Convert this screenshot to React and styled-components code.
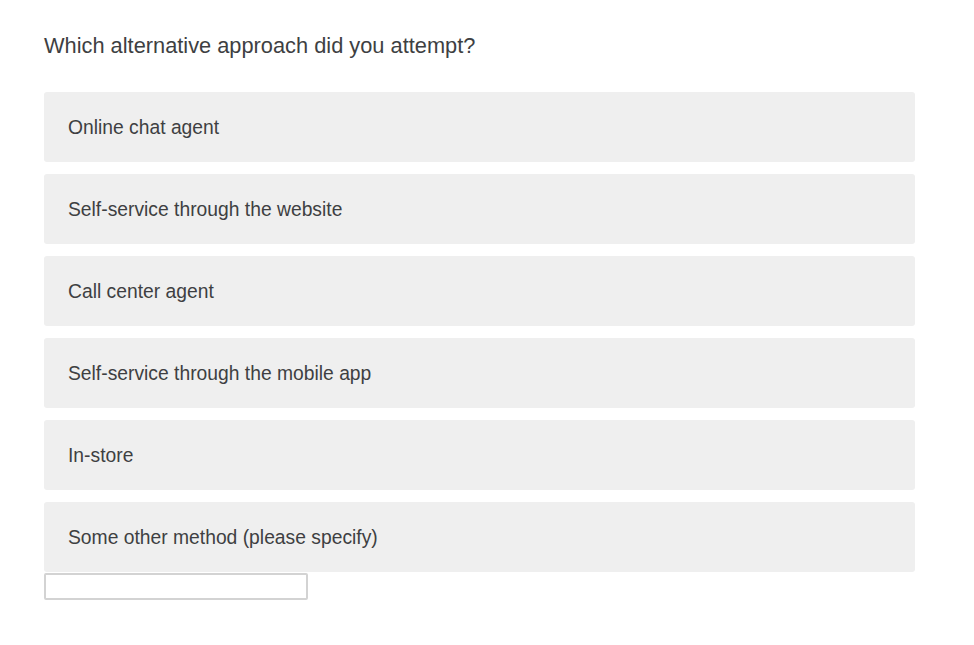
import styled, { createGlobalStyle } from "styled-components";

const GlobalStyle = createGlobalStyle`
body {
  margin: 0;
  background: #ffffff;
  font-family: "Liberation Sans", Arial, sans-serif;
}
`

export default function App(){

    const options = [
        "Online chat agent",
        "Self-service through the website",
        "Call center agent",
        "Self-service through the mobile app",
        "In-store",
        "Some other method (please specify)"
    ];

    return(
        <>
        <GlobalStyle />
        <Page>
            <Question>Which alternative approach did you attempt?</Question>
            <Choices>
                {
                    options.map(
                        (o) => <Choice key={o}>{o}</Choice>
                    )
                }
            </Choices>
            <OtherInput type="text" />
        </Page>
        </>
    )
}

const Page = styled.div`
padding: 32px 59px 0 44px;
`

const Question = styled.div`
font-size: 21.8px;
line-height: 28px;
color: #3e3f42;
margin-bottom: 32px;
`

const Choices = styled.div`
display: flex;
flex-direction: column;
gap: 12px;
`

const Choice = styled.div`
height: 70px;
box-sizing: border-box;
display: flex;
align-items: center;
padding: 1px 24px 0 24px;
background-color: #efefef;
border-radius: 3px;
font-size: 19.3px;
color: #3e3f42;
`

const OtherInput = styled.input`
display: block;
box-sizing: border-box;
width: 264px;
height: 27px;
margin: 1px 0 0 0;
border: 2px solid #d3d3d3;
border-radius: 2px;
background: #ffffff;
outline: none;
`
